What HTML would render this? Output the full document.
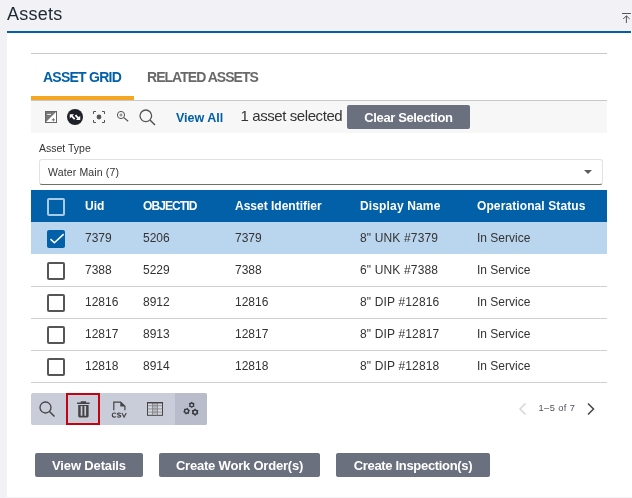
<!DOCTYPE html>
<html><head><meta charset="utf-8">
<style>
*{box-sizing:border-box;margin:0;padding:0}
html,body{width:632px;height:498px;overflow:hidden}
body{background:#f1f1f6;font-family:"Liberation Sans",sans-serif;position:relative;color:#333}
.abs{position:absolute}
.title{left:7px;top:3.4px;font-size:18px;line-height:22px;color:#1d2a33;letter-spacing:0.25px}
.blue{left:7px;top:31px;width:624px;height:2px;background:#0060a8}
.panel{left:7px;top:33px;width:625px;height:464px;background:#fff}
.hl{background:#c8c8c8;height:1px}
.tab{font-weight:bold;font-size:14px;line-height:16px;letter-spacing:-0.75px;white-space:nowrap}
.tb{left:31px;top:101px;width:576px;height:32px;background:#f7f7f7}
.btn{background:#6b707f;color:#fff;font-weight:bold;font-size:13px;letter-spacing:-0.5px;text-align:center;border-radius:2px;height:24px;line-height:26px;white-space:nowrap}
.lbl{font-size:10.5px;line-height:12px;color:#333;white-space:nowrap}
.sel{left:39px;top:159px;width:564px;height:26px;border:1px solid #e2e2e2;border-bottom:1px solid #707070;border-radius:3px;background:#fff}
.th{left:31px;top:190px;width:576px;height:32px;background:#0060a8}
.row{left:31px;width:576px;height:32px;border-bottom:1px solid #cfcfcf}
.row.s{background:#bad6ee;border-bottom:none}
.c{position:absolute;top:0;line-height:32px;font-size:12px;color:#333;white-space:nowrap}
.th .c{color:#fff;font-weight:bold;font-size:12px}
.cb{position:absolute;left:16px;top:8px;width:18px;height:18px;border:2px solid #555;border-radius:2px;background:#fff}
.th .cb{border-color:#a9cbe6;background:transparent}
.row.s .cb{border-color:#0060a8;background:#0060a8}
.c1{left:54px}.c2{left:112px}.c3{left:204px}.c4{left:329px;letter-spacing:0.15px}.c5{left:446px}
.ftb{left:31px;top:393px;width:176px;height:32px;background:#c9ccd9;border-radius:2px}
.gear{left:175px;top:393px;width:32px;height:32px;background:#b9bccb;border-radius:0 2px 2px 0}
.red{left:66px;top:392.6px;width:34px;height:32.4px;border:2px solid #c00414}
svg{position:absolute;overflow:visible}
</style></head><body><div id="w" style="position:absolute;left:0;top:0;width:632px;height:498px;will-change:transform;opacity:0.999">
<div class="abs title">Assets</div>
<svg style="left:621px;top:12px" width="11" height="12" viewBox="0 0 11 12"><path d="M1 1.5H9.8M5.4 4V11M2.2 7L5.4 3.8L8.7 7" fill="none" stroke="#555" stroke-width="1"/></svg>
<div class="abs blue"></div>
<div class="abs panel"></div>
<div class="abs" style="left:631px;top:30px;width:1px;height:4px;background:#fff"></div>
<div class="abs hl" style="left:31px;top:53px;width:576px"></div>
<div class="abs tab" style="left:43px;top:69px;color:#0060a8">ASSET GRID</div>
<div class="abs tab" style="left:147px;top:69px;color:#686868;letter-spacing:-0.97px">RELATED ASSETS</div>
<div class="abs hl" style="left:31px;top:100px;width:576px"></div>
<div class="abs" style="left:31px;top:96px;width:103px;height:4px;background:#f5a623"></div>
<div class="abs tb"></div>
<!-- toolbar icons -->
<svg style="left:45px;top:111px" width="12" height="12" viewBox="0 0 12 12"><rect x="0.5" y="0.5" width="11" height="11" fill="#fff" stroke="#666"/><path d="M1 1H11L1 11Z" fill="#777"/><path d="M2.2 3.4H6" stroke="#fff" stroke-width="0.9"/><path d="M6.8 8.8H10M8.4 7.2V10.4" stroke="#666" stroke-width="0.9"/></svg>
<svg style="left:67.1px;top:108.9px" width="16" height="16" viewBox="-7.95 -7.95 15.9 15.9"><circle cx="0" cy="0" r="7.95" fill="#1e2228"/><path d="M-3.5 -1.1L-0.3 2.1M3.5 1.4L0.4 -1.8" stroke="#fff" stroke-width="1.9" fill="none"/><path d="M-5.2 -2.7H-0.9L-5.2 1.6Z M5.2 3V-1.2L0.9 3Z" fill="#fff"/></svg>
<svg style="left:93px;top:111px" width="12" height="12" viewBox="0 0 12 12"><path d="M0.5 3V0.5H3M9 0.5H11.5V3M11.5 9V11.5H9M3 11.5H0.5V9" fill="none" stroke="#555" stroke-width="1"/><circle cx="6" cy="6" r="2.4" fill="#555"/></svg>
<svg style="left:116px;top:110.3px" width="13" height="12" viewBox="0 0 13 12"><circle cx="5" cy="5" r="3.6" fill="none" stroke="#555" stroke-width="1"/><path d="M7.8 7.6L12.2 11.3" stroke="#555" stroke-width="1.2"/><path d="M3.4 5H6.6M5 3.4V6.6" stroke="#666" stroke-width="0.8"/></svg>
<svg style="left:139px;top:109px" width="17" height="17" viewBox="0 0 17 17"><circle cx="6.8" cy="6.8" r="5.8" fill="none" stroke="#555" stroke-width="1.3"/><path d="M11 11L16 16" stroke="#555" stroke-width="1.5"/></svg>
<div class="abs" style="left:176px;top:109.6px;font-size:12.5px;line-height:16px;font-weight:bold;color:#0060a8;white-space:nowrap">View All</div>
<div class="abs" style="left:240.6px;top:106.6px;font-size:15px;letter-spacing:-0.42px;line-height:18px;color:#333;white-space:nowrap">1 asset selected</div>
<div class="abs btn" style="left:347px;top:105px;width:123px;letter-spacing:-0.37px;line-height:25.4px">Clear Selection</div>
<div class="abs lbl" style="left:39px;top:142.4px">Asset Type</div>
<div class="abs sel"></div>
<div class="abs lbl" style="left:48px;top:166.4px;letter-spacing:0.15px">Water Main (7)</div>
<div class="abs" style="left:584px;top:170px;width:0;height:0;border-left:4px solid transparent;border-right:4px solid transparent;border-top:4px solid #5c5c5c"></div>
<!-- table -->
<div class="abs th"><div class="cb"></div><div class="c c1">Uid</div><div class="c c2" style="letter-spacing:-0.9px">OBJECTID</div><div class="c c3">Asset Identifier</div><div class="c c4">Display Name</div><div class="c c5" style="letter-spacing:0.1px">Operational Status</div></div>
<div class="abs row s" style="top:222px"><div class="cb"><svg style="left:0;top:0" width="14" height="14" viewBox="0 0 14 14"><path d="M1.5 7.1L5.4 10.8L14.7 2.1" fill="none" stroke="#fff" stroke-width="1.5"/></svg></div><div class="c c1">7379</div><div class="c c2">5206</div><div class="c c3">7379</div><div class="c c4">8" UNK #7379</div><div class="c c5">In Service</div></div>
<div class="abs row" style="top:254px;height:33px"><div class="cb"></div><div class="c c1">7388</div><div class="c c2">5229</div><div class="c c3">7388</div><div class="c c4">6" UNK #7388</div><div class="c c5">In Service</div></div>
<div class="abs row" style="top:286px;height:33px"><div class="cb"></div><div class="c c1">12816</div><div class="c c2">8912</div><div class="c c3">12816</div><div class="c c4">8" DIP #12816</div><div class="c c5">In Service</div></div>
<div class="abs row" style="top:318px;height:33px"><div class="cb"></div><div class="c c1">12817</div><div class="c c2">8913</div><div class="c c3">12817</div><div class="c c4">8" DIP #12817</div><div class="c c5">In Service</div></div>
<div class="abs row" style="top:350px;height:33px"><div class="cb"></div><div class="c c1">12818</div><div class="c c2">8914</div><div class="c c3">12818</div><div class="c c4">8" DIP #12818</div><div class="c c5">In Service</div></div>
<!-- footer toolbar -->
<div class="abs ftb"></div>
<div class="abs gear"></div>
<div class="abs red"></div>
<svg style="left:39px;top:401px" width="17" height="17" viewBox="0 0 17 17"><circle cx="6.5" cy="6.5" r="5.5" fill="none" stroke="#444" stroke-width="1.3"/><path d="M10.5 10.5L15.5 15.5" stroke="#444" stroke-width="1.5"/></svg>
<svg style="left:76.5px;top:400.7px" width="13" height="17" viewBox="0 0 13 17"><path d="M3.7 0.3H9.1V1.4H12.6V3H0.1V1.4H3.7Z" fill="#444"/><path d="M1.2 4H11.6V15Q11.6 16.4 10.2 16.4H2.6Q1.2 16.4 1.2 15Z" fill="#444"/><path d="M4.55 5V14.7M8.25 5V14.7" stroke="#c9ccd9" stroke-width="1.7"/></svg>
<svg style="left:111.8px;top:400.7px" width="15" height="17" viewBox="0 0 15 17"><path d="M1.8 9.3V1.2H8.6L12.9 5.2V9.3" fill="none" stroke="#444" stroke-width="1.2"/><path d="M8.3 1V5.5H13Z" fill="#444"/><g fill="none" stroke="#444" stroke-width="1.1" transform="translate(-0.3 -0.2) scale(1.04 1.03)"><path d="M4 12.6Q3.5 11.9 2.4 11.9Q0.6 11.9 0.6 13.9Q0.6 15.9 2.4 15.9Q3.5 15.9 4 15.2"/><path d="M8.6 12.5Q8.2 11.9 7 11.9Q5.5 11.9 5.5 12.9Q5.5 13.7 7 13.9Q8.7 14.1 8.7 15Q8.7 15.9 7.1 15.9Q5.8 15.9 5.3 15.2"/><path d="M9.8 11.9L11.9 15.8L14 11.9"/></g></svg>
<svg style="left:147.2px;top:402.2px" width="16" height="14" viewBox="0 0 16 14"><rect x="0.5" y="0.5" width="15" height="12.8" fill="#d6d8e0" stroke="#444"/><rect x="5.6" y="1" width="4.8" height="12" fill="#b6b8c2"/><path d="M0.5 3.7H15.5M0.5 6.9H15.5M0.5 10.1H15.5M5.5 0.5V13.3M10.5 0.5V13.3" stroke="#777" stroke-width="0.7"/><path d="M0.5 1H15.5" stroke="#444" stroke-width="0.9"/></svg>
<svg style="left:183px;top:402px" width="16" height="15" viewBox="0 0 16 15"><path fill-rule="evenodd" fill="#33363c" d="M8.70 -0.30L9.90 0.82L11.47 1.30L11.10 2.90L11.47 4.50L9.90 4.98L8.70 6.10L7.50 4.98L5.93 4.50L6.30 2.90L5.93 1.30L7.50 0.82ZM7.45 2.90a1.25 1.25 0 1 0 2.5 0a1.25 1.25 0 1 0 -2.5 0ZM4.51 5.82L5.44 7.36L6.98 8.29L6.11 9.87L6.07 11.67L4.27 11.71L2.69 12.58L1.76 11.04L0.22 10.11L1.09 8.53L1.13 6.73L2.93 6.69ZM2.25 9.20a1.35 1.35 0 1 0 2.7 0a1.35 1.35 0 1 0 -2.7 0ZM12.10 6.50L13.50 7.78L15.30 8.35L14.90 10.20L15.30 12.05L13.50 12.62L12.10 13.90L10.70 12.62L8.90 12.05L9.30 10.20L8.90 8.35L10.70 7.78ZM10.65 10.20a1.45 1.45 0 1 0 2.9 0a1.45 1.45 0 1 0 -2.9 0Z"/></svg>
<!-- pagination -->
<svg style="left:519px;top:403px" width="8" height="12" viewBox="0 0 8 12"><path d="M6.5 0.5L1 6L6.5 11.5" fill="none" stroke="#d6d6d6" stroke-width="1.5"/></svg>
<div class="abs" style="left:538.5px;top:402px;font-size:9.3px;letter-spacing:0.42px;line-height:13px;color:#50505c;white-space:nowrap">1–5 of 7</div>
<svg style="left:587px;top:403px" width="8" height="12" viewBox="0 0 8 12"><path d="M1 0.5L6.5 6L1 11.5" fill="none" stroke="#444" stroke-width="1.5"/></svg>
<!-- buttons -->
<div class="abs btn" style="left:35px;top:453px;width:108px;letter-spacing:-0.15px">View Details</div>
<div class="abs btn" style="left:159px;top:453px;width:161px;letter-spacing:-0.2px">Create Work Order(s)</div>
<div class="abs btn" style="left:336px;top:453px;width:154px;letter-spacing:-0.32px">Create Inspection(s)</div>
</div></body></html>
